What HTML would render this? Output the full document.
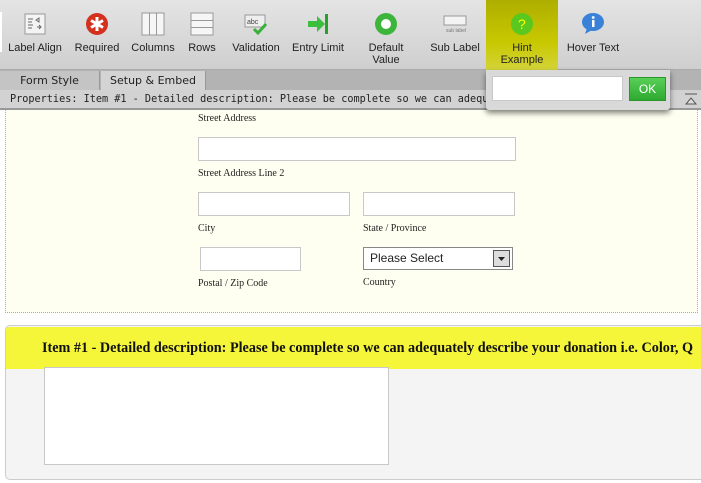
<!DOCTYPE html>
<html><head><meta charset="utf-8"><style>
*{margin:0;padding:0;box-sizing:border-box}
body{width:701px;height:483px;overflow:hidden;background:#fff;position:relative;font-family:"Liberation Sans",sans-serif}
.a{position:absolute}
.tb{left:0;top:0;width:701px;height:70px;background:linear-gradient(#e4e4e4,#cfcfcf);border-bottom:1px solid #aaa}
.btn{position:absolute;top:0;height:70px;text-align:center;font-size:11px;color:#222;line-height:12px}
.btn .ic{position:absolute;top:12px;left:50%;margin-left:-12px;width:24px;height:24px}
.btn .t{position:absolute;top:42px;width:100%;left:0}
.lbl{font-family:"Liberation Serif",serif;font-size:10px;color:#222;position:absolute}
.in{position:absolute;border:1px solid #c8c8c8;background:#fff}
</style></head><body>
<div class="a tb"></div>
<div class="a" style="left:0;top:12px;width:2px;height:40px;background:#fff"></div>
<div class="btn" style="left:4px;width:62px"><svg class="ic" viewBox="0 0 24 24"><rect x="2" y="2" width="20" height="20" fill="#f4f4f4" stroke="#999"/><path d="M5 7h5M5 10h4M5 13h5M5 16h4M13 8l3-2v4zM14 15h4M16 13l2 2-2 2" stroke="#666" fill="none"/></svg><div class="t">Label Align</div></div>
<div class="btn" style="left:70px;width:54px"><svg class="ic" viewBox="0 0 24 24"><circle cx="12" cy="12" r="11" fill="#d3301e"/><path d="M12 5v14M6 8.5l12 7M18 8.5l-12 7" stroke="#fff" stroke-width="3"/></svg><div class="t">Required</div></div>
<div class="btn" style="left:126px;width:54px"><svg class="ic" viewBox="0 0 24 24"><rect x="1" y="1" width="22" height="22" fill="#f6f6f6" stroke="#999"/><path d="M8.5 1v22M15.5 1v22" stroke="#999"/></svg><div class="t">Columns</div></div>
<div class="btn" style="left:180px;width:44px"><svg class="ic" viewBox="0 0 24 24"><rect x="1" y="1" width="22" height="22" fill="#f6f6f6" stroke="#999"/><path d="M1 8.5h22M1 15.5h22" stroke="#999"/></svg><div class="t">Rows</div></div>
<div class="btn" style="left:228px;width:56px"><svg class="ic" viewBox="0 0 24 24"><rect x="1" y="3" width="20" height="12" fill="#eee" stroke="#999"/><text x="3" y="12" font-size="7" fill="#444" font-family="Liberation Sans">abc</text><path d="M10 17l4 4 8-9" stroke="#3ab03a" stroke-width="3" fill="none"/></svg><div class="t">Validation</div></div>
<div class="btn" style="left:288px;width:60px"><svg class="ic" viewBox="0 0 24 24"><path d="M2 9h9V4l8 8-8 8v-5H2z" fill="#3cbf3c"/><rect x="19" y="2" width="3" height="20" fill="#2a9f2a"/></svg><div class="t">Entry Limit</div></div>
<div class="btn" style="left:360px;width:52px"><svg class="ic" viewBox="0 0 24 24"><circle cx="12" cy="12" r="11" fill="#3db53d"/><circle cx="12" cy="12" r="5" fill="#fff"/></svg><div class="t">Default<br>Value</div></div>
<div class="btn" style="left:426px;width:58px"><svg class="ic" viewBox="0 0 24 24"><rect x="1" y="4" width="22" height="9" fill="#f4f4f4" stroke="#999"/><text x="3" y="20" font-size="5" fill="#777" font-family="Liberation Sans">sub label</text></svg><div class="t">Sub Label</div></div>
<div class="btn" style="left:486px;width:72px;background:linear-gradient(#aeae00,#c8c800 60%,#d4d43a)"><svg class="ic" viewBox="0 0 24 24"><circle cx="12" cy="12" r="11" fill="#5ac81e"/><text x="8" y="17" font-size="14" fill="#ff0" font-family="Liberation Sans">?</text></svg><div class="t">Hint<br>Example</div></div>
<div class="btn" style="left:562px;width:62px"><svg class="ic" viewBox="0 0 24 24"><ellipse cx="12" cy="10" rx="11" ry="9" fill="#3a82d8"/><path d="M6 16l-2 6 7-4z" fill="#3a82d8"/><rect x="11" y="8" width="2.5" height="7" fill="#fff"/><circle cx="12.2" cy="5.5" r="1.4" fill="#fff"/></svg><div class="t">Hover Text</div></div>
<div class="a" style="left:0;top:70px;width:701px;height:20px;background:#b3b3b3"></div>
<div class="a" style="left:0;top:71px;width:100px;height:19px;background:#c4c4c4;border-right:1px solid #999;font:11px 'DejaVu Sans',sans-serif;color:#222;text-align:center;line-height:19px">Form Style</div>
<div class="a" style="left:101px;top:71px;width:105px;height:19px;background:#d4d4d4;border-right:1px solid #999;font:11px 'DejaVu Sans',sans-serif;color:#222;text-align:center;line-height:19px">Setup &amp; Embed</div>
<div class="a" style="left:0;top:90px;width:701px;height:20px;background:#d2d2d2;border-bottom:2px solid #999;font:10.2px 'DejaVu Sans Mono','Liberation Mono',monospace;color:#222;line-height:19px;padding-left:10px;white-space:nowrap">Properties: Item #1 - Detailed description: Please be complete so we can adequat...</div>
<div class="a" style="left:5px;top:110px;width:693px;height:203px;background:#fefff0;border:1px dotted #aaa;border-top:none"></div>
<div class="a" style="left:684px;top:92px;width:14px;height:12px"><svg width="14" height="12"><path d="M1 1h12M2 11h10L7 5z" stroke="#555" fill="#ddd"/></svg></div>
<div class="a" style="left:486px;top:70px;width:184px;height:40px;background:#d9d9d9;box-shadow:0 3px 6px rgba(0,0,0,.5);border-radius:0 0 3px 3px"></div>
<div class="in" style="left:492px;top:76px;width:131px;height:25px"></div>
<div class="a" style="left:629px;top:77px;width:37px;height:24px;background:linear-gradient(#58d058,#2fa92f);border:1px solid #2a962a;color:#fff;font-size:12px;text-align:center;line-height:22px">OK</div>
<div class="lbl" style="left:198px;top:113px">Street Address</div>
<div class="in" style="left:198px;top:137px;width:318px;height:24px"></div>
<div class="lbl" style="left:198px;top:168px">Street Address Line 2</div>
<div class="in" style="left:198px;top:192px;width:152px;height:24px"></div>
<div class="in" style="left:363px;top:192px;width:152px;height:24px"></div>
<div class="lbl" style="left:198px;top:223px">City</div>
<div class="lbl" style="left:363px;top:223px">State / Province</div>
<div class="in" style="left:200px;top:247px;width:101px;height:24px"></div>
<div class="a" style="left:363px;top:247px;width:150px;height:23px;border:1px solid #888;background:#fff;font-size:12px;color:#222;line-height:21px;padding-left:6px">Please Select</div>
<div class="a" style="left:493px;top:250px;width:17px;height:17px;border:1px solid #555;background:#ddd"><svg width="15" height="15"><path d="M4 6h7l-3.5 4z" fill="#222"/></svg></div>
<div class="lbl" style="left:198px;top:278px">Postal / Zip Code</div>
<div class="lbl" style="left:363px;top:277px">Country</div>
<div class="a" style="left:5px;top:325px;width:710px;height:155px;background:#f4f4f4;border:1px solid #ccc;border-radius:5px;overflow:hidden">
<div style="height:42px;background:#f5f53a;margin-top:1px;font:bold 14.2px 'Liberation Serif',serif;color:#111;white-space:nowrap;padding-left:36px;line-height:42px">Item #1 - Detailed description: Please be complete so we can adequately describe your donation i.e. Color, Q</div>
</div>
<div class="in" style="left:44px;top:367px;width:345px;height:98px"></div>
</body></html>
